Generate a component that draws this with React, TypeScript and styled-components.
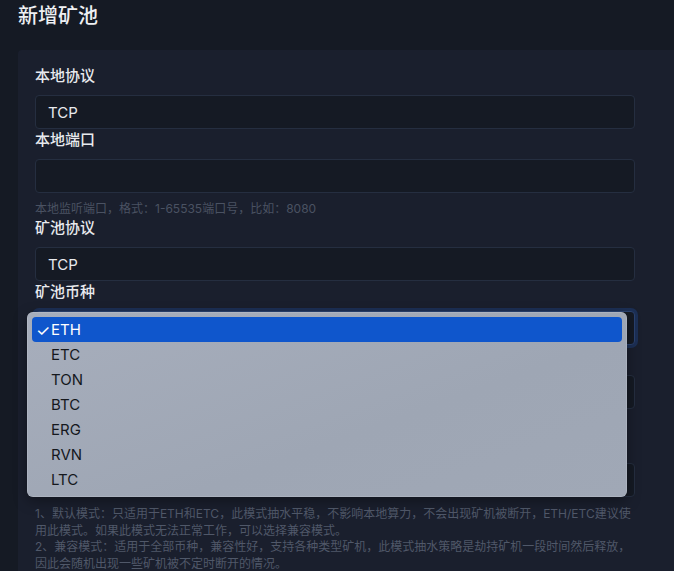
import React from 'react'
import styled, { createGlobalStyle } from 'styled-components'

const GlobalStyle = createGlobalStyle`
  html, body {
    margin: 0;
    padding: 0;
    background: #151a24;
    color: #e8eaee;
    font-family: Inter, 'Noto Sans CJK SC', sans-serif;
    overflow: hidden;
  }
`

const coins = ['ETH', 'ETC', 'TON', 'BTC', 'ERG', 'RVN', 'LTC']

const Page = styled.div`
  width: 674px;
  height: 571px;
  overflow: hidden;
`

const Header = styled.div`
  height: 50px;
  padding: 0 18px;
  box-sizing: border-box;
`

const Title = styled.h1`
  margin: 0;
  font-size: 20px;
  line-height: 32px;
  font-weight: 500;
  color: #eef0f3;
`

const Card = styled.div`
  margin-left: 18px;
  width: 700px;
  min-height: 600px;
  padding: 15px 17px;
  box-sizing: border-box;
  background: #1a1f2d;
  border-radius: 4px 0 0 0;
`

const Form = styled.div`
  width: 600px;
  display: flex;
  flex-direction: column;
`

const Field = styled.div`
  position: relative;
  display: flex;
  flex-direction: column;
`

const Label = styled.div`
  min-height: 22px;
  font-size: 15px;
  line-height: 22px;
  font-weight: 500;
  color: #e8eaee;
  margin-bottom: 8px;
`

const Input = styled.div<{ $focused?: boolean }>`
  height: 34px;
  box-sizing: border-box;
  display: flex;
  align-items: center;
  padding: 0 12px;
  background: #151a24;
  border: 1px solid ${({ $focused }) => ($focused ? '#2a4270' : '#252e40')};
  border-radius: 4px;
  font-size: 15px;
  color: #e8eaee;
  box-shadow: ${({ $focused }) => ($focused ? '0 0 0 3px #1c2f54' : 'none')};
`

const Spacer = styled.div<{ $h: number }>`
  height: ${({ $h }) => $h}px;
`

const Hint = styled.div`
  margin-top: 7px;
  font-size: 12px;
  line-height: 17px;
  color: #4a5262;
`

const Help = styled.div`
  margin-top: 9px;
  font-size: 12px;
  line-height: 16.5px;
  color: #505869;
`

const Menu = styled.div`
  position: absolute;
  left: -8px;
  top: 31px;
  width: 600px;
  padding: 5px;
  box-sizing: border-box;
  background: linear-gradient(160deg, #a7aebc 0%, #9ea6b4 60%, #a0a8b6 100%);
  border-radius: 6px;
  box-shadow: 0 4px 14px rgba(0, 0, 0, 0.35), inset 0 0 0 0.5px rgba(255, 255, 255, 0.25);
  z-index: 10;
`

const Option = styled.div<{ $selected?: boolean }>`
  position: relative;
  height: 25px;
  display: flex;
  align-items: center;
  padding-left: 19px;
  border-radius: 4px;
  font-size: 15px;
  color: ${({ $selected }) => ($selected ? '#ffffff' : '#15181d')};
  background: ${({ $selected }) => ($selected ? '#0f56cc' : 'transparent')};
`

const Check = styled.span`
  position: absolute;
  left: 4px;
  font-size: 16px;
  color: #ffffff;
`

export default function App() {
  return (
    <Page>
      <GlobalStyle />
      <Header>
        <Title>新增矿池</Title>
      </Header>
      <Card>
        <Form>
          <Field>
            <Label>本地协议</Label>
            <Input>TCP</Input>
          </Field>
          <Field>
            <Label>本地端口</Label>
            <Input />
            <Hint>本地监听端口，格式：1-65535端口号，比如：8080</Hint>
          </Field>
          <Field>
            <Label>矿池协议</Label>
            <Input>TCP</Input>
          </Field>
          <Field>
            <Label>矿池币种</Label>
            <Input $focused />
            <Menu>
              {coins.map((c, i) => (
                <Option key={c} $selected={i === 0}>
                  {i === 0 && <Check>✓</Check>}
                  {c}
                </Option>
              ))}
            </Menu>
          </Field>
          {/* fields below are covered by the open menu */}
          <Field>
            <Spacer $h={30} />
            <Input />
            <Spacer $h={54} />
            <Input />
            <Help>
              1、默认模式：只适用于ETH和ETC，此模式抽水平稳，不影响本地算力，不会出现矿机被断开，ETH/ETC建议使用此模式。如果此模式无法正常工作，可以选择兼容模式。
              <br />
              2、兼容模式：适用于全部币种，兼容性好，支持各种类型矿机，此模式抽水策略是劫持矿机一段时间然后释放，因此会随机出现一些矿机被不定时断开的情况。
            </Help>
          </Field>
        </Form>
      </Card>
    </Page>
  )
}
